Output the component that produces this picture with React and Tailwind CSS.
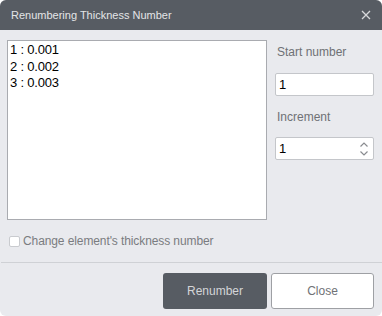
export default function App() {
  const rows = ['1 : 0.001', '2 : 0.002', '3 : 0.003'];

  return (
    <div className="w-[382px] h-[316px] bg-white" style={{ fontFamily: '"Liberation Sans", Arial, sans-serif' }}>
      <div className="w-full h-full rounded-[6px] overflow-hidden bg-[#e9eaee] flex flex-col">
        {/* Title bar */}
        <div className="h-[30px] bg-[#575c63] flex items-center justify-between pl-[11px] pr-[11px] shrink-0">
          <span className="text-[11px] text-[#e4e5e7]">Renumbering Thickness Number</span>
          <svg width="10" height="10" viewBox="0 0 10 10" className="text-[#d8d9db]">
            <path d="M1 1 L9 9 M9 1 L1 9" stroke="currentColor" strokeWidth="1.3" />
          </svg>
        </div>

        {/* Body */}
        <div className="flex px-[7px] pt-[10px]">
          <div className="w-[260px] h-[180px] bg-white border border-[#a9abb0] px-[2px] pt-[1px]">
            {rows.map((r) => (
              <div key={r} className="text-[13px] leading-[16.5px] text-black tracking-[-0.2px]">{r}</div>
            ))}
          </div>
          <div className="ml-[8px] w-[99px] flex flex-col">
            <div className="mt-[4px] pl-[2px] text-[12px] leading-[16px] text-[#6f7175]">Start number</div>
            <div className="mt-[13px] h-[23px] bg-white border border-[#c4c6ca] rounded-[2px] flex items-center pl-[3px] text-[13px] text-black">1</div>
            <div className="mt-[13px] pl-[2px] text-[12px] leading-[16px] text-[#6f7175]">Increment</div>
            <div className="mt-[12px] h-[23px] bg-white border border-[#c4c6ca] rounded-[2px] flex items-center justify-between pl-[3px] pr-[4px] text-[13px] text-black">
              <span>1</span>
              <svg width="10" height="16" viewBox="0 0 10 16" className="text-[#8a8c90]">
                <path d="M1.5 5.5 L5 2 L8.5 5.5 M1.5 10.5 L5 14 L8.5 10.5" fill="none" stroke="currentColor" strokeWidth="1.2" />
              </svg>
            </div>
          </div>
        </div>

        {/* Checkbox */}
        <div className="flex items-center pl-[9px] mt-[15px] h-[12px]">
          <div className="w-[11px] h-[11px] bg-white border border-[#c9cbcf] rounded-[2px]" />
          <span className="ml-[3px] text-[12px] text-[#7a7c80] tracking-[-0.1px]">Change element's thickness number</span>
        </div>

        {/* Separator */}
        <div className="mt-[15px] h-px bg-[#cfd1d5] ml-px" />

        {/* Buttons */}
        <div className="flex justify-end gap-[4px] pr-[8px] mt-[10px]">
          <button className="w-[104px] h-[36px] bg-[#575c63] rounded-[3px] text-[12px] text-[#d4d5d8]">Renumber</button>
          <button className="w-[103px] h-[36px] bg-white border border-[#9ea0a4] rounded-[3px] text-[12px] text-[#707276]">Close</button>
        </div>
      </div>
    </div>
  );
}
